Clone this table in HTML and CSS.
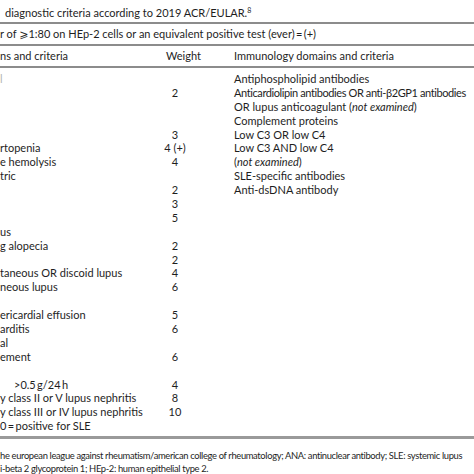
FILE: index.html
```html
<!DOCTYPE html>
<html>
<head>
<meta charset="utf-8">
<link rel="stylesheet" href="styles.css">
</head>
<body>
<div class="page">
  <div class="title">diagnostic criteria according to 2019 ACR/EULAR.<sup>8</sup></div>
  <div class="entry">r of ⩾1:80 on HEp-2 cells or an equivalent positive test (ever)&#8201;=&#8201;(+)</div>
  <div class="head grid">
    <div>ns and criteria</div>
    <div class="wh">Weight</div>
    <div class="rc">Immunology domains and criteria</div>
  </div>
  <div class="body grid">
    <div class="faint">l</div><div class="w"></div><div class="rc">Antiphospholipid antibodies</div>
    <div></div><div class="w">2</div><div class="rc tight">Anticardiolipin antibodies OR anti-β2GP1 antibodies</div>
    <div></div><div class="w"></div><div class="rc">OR lupus anticoagulant (<i>not examined</i>)</div>
    <div></div><div class="w"></div><div class="rc">Complement proteins</div>
    <div></div><div class="w">3</div><div class="rc">Low C3 OR low C4</div>
    <div>rtopenia</div><div class="w">4 (+)</div><div class="rc">Low C3 AND low C4</div>
    <div>e hemolysis</div><div class="w">4</div><div class="rc">(<i>not examined</i>)</div>
    <div>tric</div><div class="w"></div><div class="rc">SLE-specific antibodies</div>
    <div></div><div class="w">2</div><div class="rc">Anti-dsDNA antibody</div>
    <div></div><div class="w">3</div><div class="rc"></div>
    <div></div><div class="w">5</div><div class="rc"></div>
    <div>us</div><div class="w"></div><div class="rc"></div>
    <div>g alopecia</div><div class="w">2</div><div class="rc"></div>
    <div></div><div class="w">2</div><div class="rc"></div>
    <div>taneous OR discoid lupus</div><div class="w">4</div><div class="rc"></div>
    <div>neous lupus</div><div class="w">6</div><div class="rc"></div>
    <div></div><div class="w"></div><div class="rc"></div>
    <div>ericardial effusion</div><div class="w">5</div><div class="rc"></div>
    <div>arditis</div><div class="w">6</div><div class="rc"></div>
    <div>al</div><div class="w"></div><div class="rc"></div>
    <div>ement</div><div class="w">6</div><div class="rc"></div>
    <div></div><div class="w"></div><div class="rc"></div>
    <div class="ind">&gt;0.5&#8201;g/24&#8201;h</div><div class="w">4</div><div class="rc"></div>
    <div>y class II or V lupus nephritis</div><div class="w">8</div><div class="rc"></div>
    <div>y class III or IV lupus nephritis</div><div class="w">10</div><div class="rc"></div>
    <div>0&#8201;=&#8201;positive for SLE</div><div class="w"></div><div class="rc"></div>
  </div>
  <div class="notes">
    <div>he european league against rheumatism/american college of rheumatology; ANA: antinuclear antibody; SLE: systemic lupus</div>
    <div>i-beta 2 glycoprotein 1; HEp-2: human epithelial type 2.</div>
  </div>
</div>
</body>
</html>
```

FILE: styles.css
```css
html, body {
  margin: 0;
  padding: 0;
  background: #ffffff;
}
body {
  width: 474px;
  height: 474px;
  overflow: hidden;
}
.page {
  font-family: "Lato", "DejaVu Sans", sans-serif;
  font-size: 11px;
  color: #1e1e1e;
  white-space: nowrap;
  overflow: hidden;
}
.title {
  padding: 3px 0 0 5px;
  line-height: 19px;
  height: 19px;
}
.title sup {
  font-size: 7px;
  vertical-align: 4px;
  line-height: 0;
}
.entry {
  border-top: 2px solid #8c8c8c;
  line-height: 20px;
  height: 20px;
}
.grid {
  display: grid;
  grid-template-columns: 160px 30px 1fr;
}
.head {
  border-top: 2px solid #8c8c8c;
  line-height: 20px;
  height: 20px;
}
.wh {
  padding-left: 6px;
}
.rc {
  padding-left: 44px;
}
.tight {
  letter-spacing: -0.4px;
}
.body {
  border-top: 2px solid #8c8c8c;
  padding: 4px 0 3px 0;
  grid-auto-rows: 13.9px;
  line-height: 13.9px;
  border-bottom: 3px solid #9a9a9a;
}
.w {
  text-align: center;
}
.faint {
  color: #b5b5b5;
}
.ind {
  padding-left: 14px;
}
.notes {
  padding-top: 10px;
  font-size: 9.4px;
  letter-spacing: -0.35px;
  line-height: 13px;
}
```
